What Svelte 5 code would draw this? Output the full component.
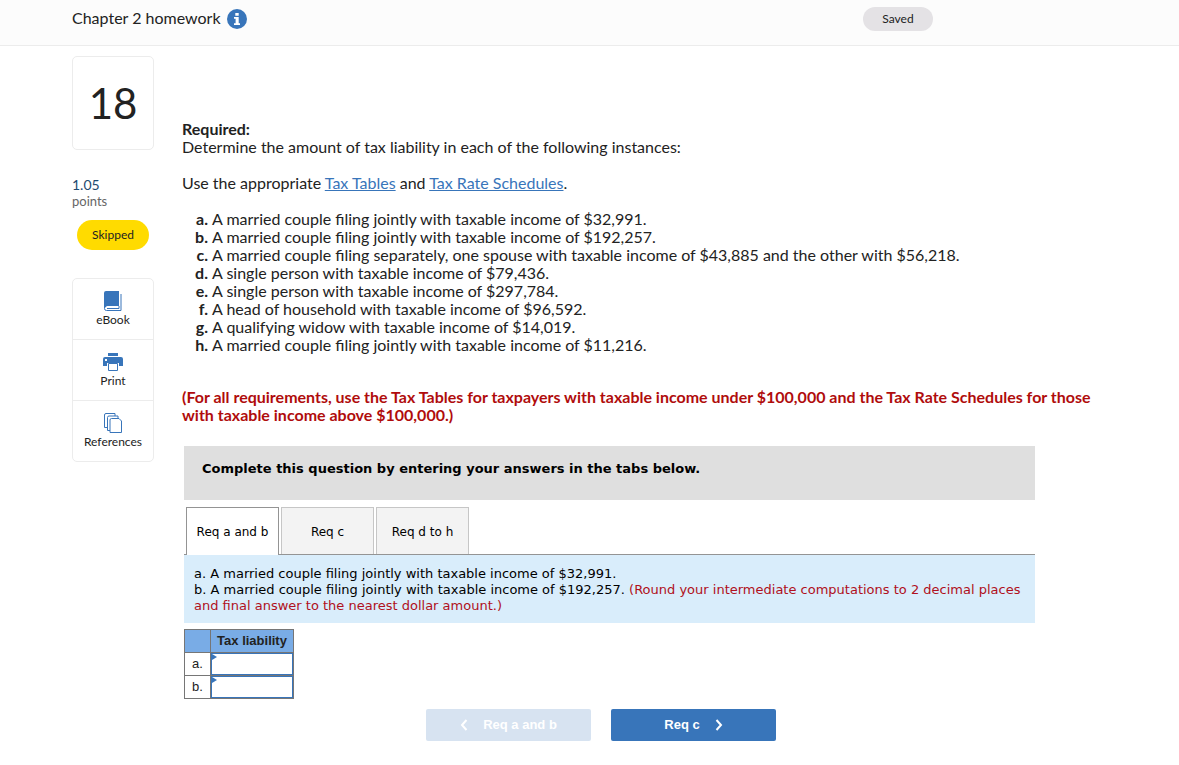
<script lang="ts">
  const instances = [
    { label: "a.", text: "A married couple filing jointly with taxable income of $32,991." },
    { label: "b.", text: "A married couple filing jointly with taxable income of $192,257." },
    { label: "c.", text: "A married couple filing separately, one spouse with taxable income of $43,885 and the other with $56,218." },
    { label: "d.", text: "A single person with taxable income of $79,436." },
    { label: "e.", text: "A single person with taxable income of $297,784." },
    { label: "f.", text: "A head of household with taxable income of $96,592." },
    { label: "g.", text: "A qualifying widow with taxable income of $14,019." },
    { label: "h.", text: "A married couple filing jointly with taxable income of $11,216." }
  ];

  const tabs = ["Req a and b", "Req c", "Req d to h"];
  let active = $state(0);

  let answers = $state([
    { label: "a.", value: "" },
    { label: "b.", value: "" }
  ]);
</script>

<header class="topbar">
  <h1>Chapter 2 homework</h1>
  <button class="info" aria-label="Assignment information">
    <svg width="20" height="20" viewBox="0 0 20 20">
      <circle cx="10" cy="10" r="10" fill="#3875ba" />
      <path fill="#fff" d="M8.300 4h3.400v2.800H8.300zM7 8h4.700v6.200H13V16H7v-1.800h1.600V9.800H7z" />
    </svg>
  </button>
  <span class="saved">Saved</span>
</header>

<div class="page">
  <aside class="side">
    <div class="number">18</div>

    <div class="points">
      <span class="score">1.05</span>
      <span>points</span>
    </div>

    <span class="skipped">Skipped</span>

    <nav class="tools">
      <button>
        <svg width="20" height="20" viewBox="0 0 20 20">
          <path fill="#3875ba" d="M3 0h13v15H4.500a2 2 0 0 0-2 1.500H1V2a2 2 0 0 1 2-2z" />
          <path fill="none" stroke="#3875ba" d="M18 3v16.500H3.500a2 2 0 0 1-2-2V15M4 17.500h12V15" />
        </svg>
        eBook
      </button>
      <button>
        <svg width="20" height="20" viewBox="0 0 20 20">
          <path fill="#3875ba" d="M5 1h10v3H5zM2 5h16a2 2 0 0 1 2 2v7h-4v-3H4v3H0V7a2 2 0 0 1 2-2z" />
          <path fill="#fff" d="M2 7h2v2H2z" />
          <path fill="#fff" stroke="#3875ba" d="M5.500 11.500h9v7h-9z" />
        </svg>
        Print
      </button>
      <button>
        <svg width="20" height="20" viewBox="0 0 20 20" fill="#fff" stroke="#3875ba">
          <path d="M1.500 2a1.500 1.500 0 0 1 1.500-1.500h9v14H1.500z" />
          <path d="M4.500 4.500A1.500 1.500 0 0 1 6 3h9v14.500H4.500z" />
          <path d="M7 7a1.500 1.500 0 0 1 1.500-1.500H16L18.500 8v11.500H7z" />
        </svg>
        References
      </button>
    </nav>
  </aside>

  <main class="question">
    <p><strong>Required:</strong><br />Determine the amount of tax liability in each of the following instances:</p>

    <p>Use the appropriate <a href="#tables">Tax Tables</a> and <a href="#schedules">Tax Rate Schedules</a>.</p>

    <ol class="instances">
      {#each instances as item}
        <li><b>{item.label}</b><span>{item.text}</span></li>
      {/each}
    </ol>

    <p class="note">
      (For all requirements, use the Tax Tables for taxpayers with taxable income under $100,000 and the Tax Rate Schedules for those with taxable income above $100,000.)
    </p>

    <section class="worksheet">
      <div class="banner">Complete this question by entering your answers in the tabs below.</div>

      <div class="tabs" role="tablist">
        {#each tabs as tab, i}
          <button role="tab" class:active={active === i} aria-selected={active === i} onclick={() => (active = i)}>{tab}</button>
        {/each}
      </div>

      <div class="prompt">
        a. A married couple filing jointly with taxable income of $32,991.<br />
        b. A married couple filing jointly with taxable income of $192,257.
        <span>(Round your intermediate computations to 2 decimal places and final answer to the nearest dollar amount.)</span>
      </div>

      <table>
        <thead>
          <tr>
            <th></th>
            <th id="liability">Tax liability</th>
          </tr>
        </thead>
        <tbody>
          {#each answers as answer, i}
            <tr>
              <td id="row-{i}">{answer.label}</td>
              <td class="cell"><input aria-labelledby="liability row-{i}" bind:value={answer.value} /></td>
            </tr>
          {/each}
        </tbody>
      </table>

      <div class="pager">
        <button disabled>
          <svg width="8" height="12" viewBox="0 0 8 12"><path d="M6.500 1 2 6l4.500 5" /></svg>
          Req a and b
        </button>
        <button onclick={() => (active = 1)}>
          Req c
          <svg width="8" height="12" viewBox="0 0 8 12"><path d="M1.500 1 6 6l-4.500 5" /></svg>
        </button>
      </div>
    </section>
  </main>
</div>

<style>
  :global(body) {
    margin: 0;
    background: #fff;
    color: #222;
    font-family: Lato, sans-serif;
    font-size: 16px;
    line-height: 18px;
  }

  button {
    font: inherit;
    color: inherit;
    cursor: pointer;
  }

  .topbar {
    display: flex;
    align-items: flex-start;
    box-sizing: border-box;
    height: 46px;
    padding: 7px 246px 0 72px;
    background: #fcfcfc;
    border-bottom: 1px solid #ececec;
  }

  h1 {
    margin: 0;
    font-size: 16px;
    font-weight: 400;
    line-height: 22px;
  }

  .info {
    display: flex;
    margin: 2px 0 0 6px;
    padding: 0;
    border: 0;
    background: none;
  }

  .saved {
    width: 70px;
    margin-left: auto;
    border-radius: 12px;
    background: #e4e2e5;
    font-size: 12px;
    line-height: 24px;
    text-align: center;
  }

  .page {
    display: flex;
    gap: 28px;
    padding: 10px 60px 24px 72px;
  }

  .side {
    display: flex;
    flex: none;
    flex-direction: column;
    width: 82px;
  }

  .number {
    border: 1px solid #ececec;
    border-radius: 5px;
    font-size: 42px;
    line-height: 92px;
    text-align: center;
  }

  .points {
    display: flex;
    flex-direction: column;
    margin-top: 27px;
    color: #666;
    font-size: 13px;
    line-height: 16px;
  }

  .score {
    color: #1f4a70;
    font-size: 14px;
  }

  .skipped {
    align-self: center;
    width: 72px;
    margin-top: 11px;
    border-radius: 15px;
    background: #ffdb00;
    font-size: 12px;
    line-height: 30px;
    text-align: center;
  }

  .tools {
    margin-top: 28px;
    border: 1px solid #ececec;
    border-radius: 5px;
  }

  .tools button {
    display: flex;
    flex-direction: column;
    align-items: center;
    width: 100%;
    height: 60px;
    padding: 12px 0 0;
    box-sizing: border-box;
    border: 0;
    background: none;
    font-size: 12px;
    line-height: 18px;
  }

  .tools button + button {
    height: 61px;
    border-top: 1px solid #ececec;
  }

  .question {
    flex: 1;
    min-width: 0;
    padding-top: 64px;
  }

  p {
    margin: 0 0 18px;
  }

  a {
    color: #3875ba;
  }

  .instances {
    margin: 0 0 34px;
    padding: 0;
    list-style: none;
  }

  .instances li {
    display: flex;
    gap: 4px;
  }

  .instances b {
    width: 26px;
    text-align: right;
  }

  .note {
    margin-bottom: 22px;
    color: #b00c0c;
    font-weight: 700;
  }

  .worksheet {
    margin: 0 84px 0 2px;
    color: #000;
    font-family: Verdana, "DejaVu Sans", sans-serif;
    font-size: 13px;
    line-height: 16px;
  }

  .banner {
    padding: 15px 18px 23px;
    background: #dfdfdf;
    font-weight: 700;
  }

  .tabs {
    display: flex;
    gap: 2px;
    margin-top: 7px;
    padding-left: 2px;
    border-bottom: 1px solid #949494;
  }

  .tabs button {
    box-sizing: border-box;
    width: 93px;
    height: 47px;
    padding: 1px 0 0;
    border: 1px solid #c6c6c6;
    border-bottom: 0;
    background: #f3f3f3;
    font-size: 12px;
  }

  .tabs .active {
    height: 48px;
    margin-bottom: -1px;
    border-color: #949494;
    background: #fff;
  }

  .prompt {
    padding: 11px 8px 9px 10px;
    background: #d9edfb;
  }

  .prompt span {
    color: #b01020;
  }

  table {
    margin-top: 6px;
    border-collapse: collapse;
    color: #222;
    font-family: "Liberation Sans", sans-serif;
    font-size: 13px;
  }

  th,
  td {
    box-sizing: border-box;
    height: 23px;
    padding: 0 5px;
    border: 1px solid #767676;
    text-align: center;
  }

  th {
    background: #79ace6;
    font-weight: 700;
    white-space: nowrap;
  }

  td {
    width: 26px;
  }

  .cell {
    position: relative;
    width: 83px;
    padding: 0;
  }

  .cell::before {
    content: "";
    position: absolute;
    top: 1px;
    left: 1px;
    border: 3px solid transparent;
    border-left: 5px solid #3875ba;
  }

  input {
    display: block;
    box-sizing: border-box;
    width: 82px;
    height: 22px;
    padding: 0 6px;
    border: 1px solid #3875ba;
    outline: 0;
    font: inherit;
  }

  .pager {
    display: flex;
    justify-content: center;
    gap: 20px;
    margin-top: 10px;
    padding-right: 17px;
  }

  .pager button {
    display: flex;
    align-items: center;
    justify-content: center;
    gap: 15px;
    width: 165px;
    height: 32px;
    padding: 0;
    border: 0;
    border-radius: 2px;
    background: #3875ba;
    color: #fff;
    font-family: "Liberation Sans", sans-serif;
    font-size: 13px;
    font-weight: 700;
  }

  .pager button:disabled {
    background: #d7e3f1;
    cursor: default;
  }

  .pager path {
    fill: none;
    stroke: #fff;
    stroke-width: 2;
  }
</style>
